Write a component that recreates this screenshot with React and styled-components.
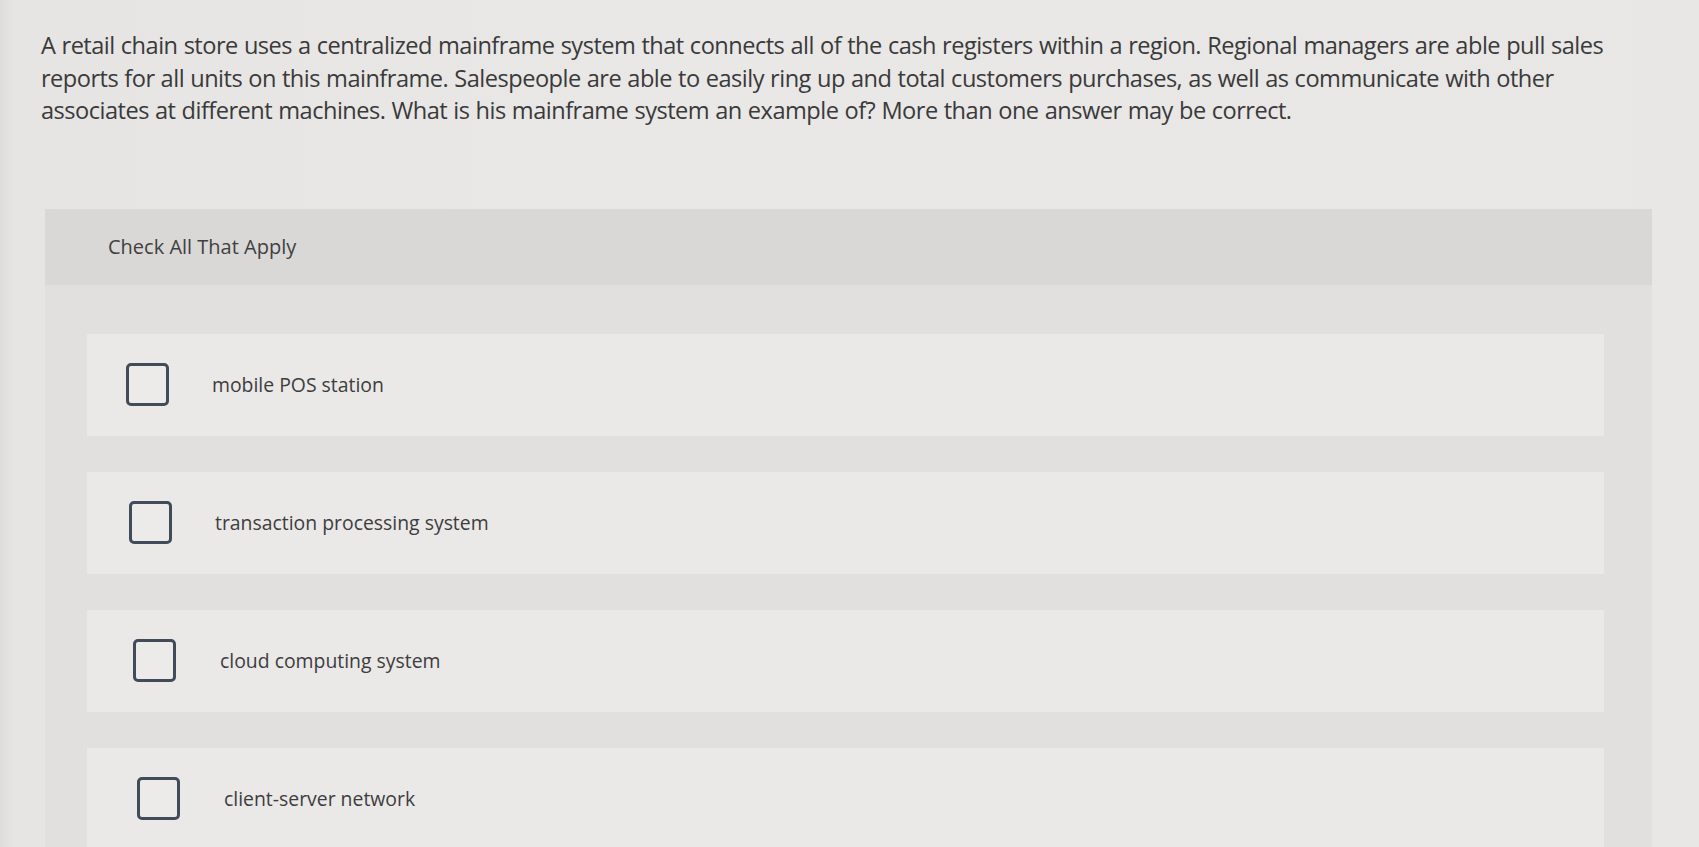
import styled, { createGlobalStyle } from 'styled-components';

const GlobalStyle = createGlobalStyle`
  html, body {
    margin: 0;
    padding: 0;
    height: 847px;
    overflow: hidden;
    background-color: #e8e7e5;
  }
  body {
    font-family: "Open Sans", "Liberation Sans", sans-serif;
    color: #3b3b3c;
  }
`;

const Page = styled.div`
  padding: 29px 0 0 0;
  height: 847px;
  box-sizing: border-box;
  background: linear-gradient(90deg, #dedddb 0px, #e6e5e3 14px, #e9e8e6 40%, #e8e7e5 100%);
`;

const Question = styled.p`
  margin: 0 0 0 41px;
  width: 1600px;
  font-size: 23.6px;
  line-height: 32.6px;
  letter-spacing: -0.52px;
  word-spacing: 0.5px;
  color: #3a3a3b;
`;

const Panel = styled.section`
  margin: 82px 0 0 45px;
  width: 1607px;
  min-height: 640px;
  background-color: #e1e0de;
`;

const PanelHeader = styled.div`
  display: flex;
  align-items: center;
  height: 76px;
  padding-left: 63px;
  background-color: #d9d8d6;
  font-size: 20px;
  color: #404041;
`;

const Options = styled.div`
  display: flex;
  flex-direction: column;
  gap: 36px;
  padding: 49px 48px 0 42px;
`;

const Option = styled.label`
  display: flex;
  align-items: center;
  height: 102px;
  padding-left: ${p => p.$indent}px;
  background-color: #eae9e7;
  cursor: pointer;
`;

const Box = styled.span`
  flex: none;
  width: 37px;
  height: 37px;
  border: 3px solid #414b5a;
  border-radius: 5px;
  background-color: #ecebe9;
  margin-right: ${p => p.$gap}px;
`;

const OptionText = styled.span`
  font-size: 19.4px;
  color: #3d3d3e;
`;

const options = [
  { text: 'mobile POS station', indent: 39, gap: 43 },
  { text: 'transaction processing system', indent: 42, gap: 43 },
  { text: 'cloud computing system', indent: 46, gap: 44 },
  { text: 'client-server network', indent: 50, gap: 44 },
];

function App() {
  return (
    <Page>
      <GlobalStyle />
      <Question>
        A retail chain store uses a centralized mainframe system that connects all of the cash registers within a region. Regional managers are able pull sales reports for all units on this mainframe. Salespeople are able to easily ring up and total customers purchases, as well as communicate with other associates at different machines. What is his mainframe system an example of? More than one answer may be correct.
      </Question>
      <Panel>
        <PanelHeader>Check All That Apply</PanelHeader>
        <Options>
          {options.map(o => (
            <Option key={o.text} $indent={o.indent}>
              <Box $gap={o.gap} />
              <OptionText>{o.text}</OptionText>
            </Option>
          ))}
        </Options>
      </Panel>
    </Page>
  );
}

export default App;
